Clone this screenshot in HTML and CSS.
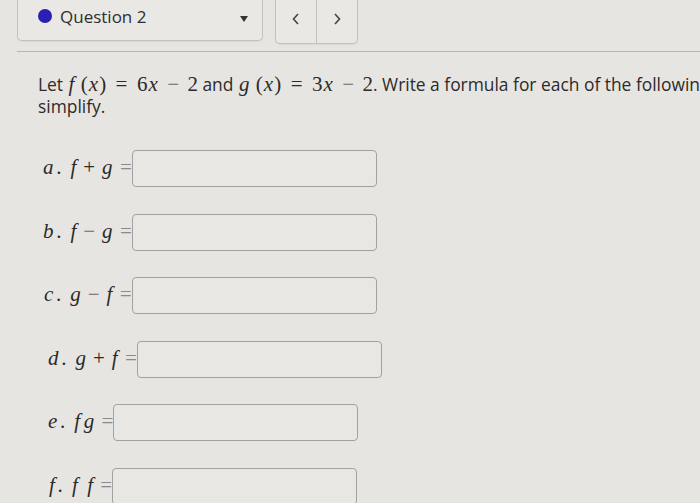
FILE: index.html
```html
<!DOCTYPE html>
<html>
<head>
<meta charset="utf-8">
<link rel="stylesheet" href="styles.css">
</head>
<body>
<header class="top">
  <div class="qbox">
    <span class="dot"></span>
    <span class="qtitle">Question 2</span>
    <svg class="caret" width="10" height="8" viewBox="0 0 10 8"><polygon points="1,1 9,1 5,7" fill="#333"/></svg>
  </div>
  <div class="nav">
    <div class="navbtn"><svg width="10" height="14" viewBox="0 0 10 14"><polyline points="7,2 2.5,7 7,12" fill="none" stroke="#444" stroke-width="1.6"/></svg></div>
    <div class="navbtn"><svg width="10" height="14" viewBox="0 0 10 14"><polyline points="3,2 7.5,7 3,12" fill="none" stroke="#444" stroke-width="1.6"/></svg></div>
  </div>
</header>
<div class="rule"></div>
<main class="content">
  <p class="prompt"><span class="line1">Let <span class="m"><i class="fv">f</i>(<i>x</i>)<span class="rel">=</span>6<i>x</i><span class="bin op">−</span>2</span> and <span class="m"><i class="fv">g</i>(<i>x</i>)<span class="rel">=</span>3<i>x</i><span class="bin op">−</span>2</span>. Write a formula for each of the following</span><br>simplify.</p>
  <div class="items">
    <div class="row r1"><span class="m lbl"><i>a</i><span class="dt">.</span><i>f</i><span class="bin">+</span><i>g</i><span class="eq">=</span></span><span class="box"></span></div>
    <div class="row r2"><span class="m lbl"><i>b</i><span class="dt">.</span><i>f</i><span class="bin op">−</span><i>g</i><span class="eq">=</span></span><span class="box"></span></div>
    <div class="row r3"><span class="m lbl"><i>c</i><span class="dt">.</span><i>g</i><span class="bin op">−</span><i>f</i><span class="eq">=</span></span><span class="box"></span></div>
    <div class="row r4"><span class="m lbl"><i>d</i><span class="dt">.</span><i>g</i><span class="bin">+</span><i>f</i><span class="eq">=</span></span><span class="box"></span></div>
    <div class="row r5"><span class="m lbl"><i>e</i><span class="dt">.</span><i>f</i><i class="pr">g</i><span class="eq">=</span></span><span class="box"></span></div>
    <div class="row r6"><span class="m lbl"><i>f</i><span class="dt">.</span><i>f</i><i class="pr wide">f</i><span class="eq">=</span></span><span class="box"></span></div>
  </div>
</main>
</body>
</html>
```
FILE: styles.css
```css
html, body {
  margin: 0;
  padding: 0;
  background: #e7e5e1;
  width: 700px;
  height: 503px;
  overflow: hidden;
  font-family: "Open Sans", "DejaVu Sans", sans-serif;
  color: #2b2b2b;
}

.top {
  display: flex;
  align-items: flex-start;
  padding-left: 17px;
}

.qbox {
  width: 246px;
  height: 41px;
  border: 1px solid #c4c2be;
  border-top: none;
  border-radius: 0 0 5px 5px;
  background: #eae8e4;
  display: flex;
  align-items: center;
  padding-left: 20px;
  box-sizing: border-box;
  box-shadow: 0 1px 1px rgba(0,0,0,0.06);
}

.dot {
  width: 14px;
  height: 14px;
  border-radius: 50%;
  background: #2a1fb3;
  margin-top: -8px;
}

.qtitle {
  font-size: 17px;
  margin-left: 8px;
  margin-top: -8px;
  color: #2e2e2e;
}

.caret {
  margin-left: auto;
  margin-right: 13px;
  margin-top: -3px;
}

.nav {
  display: flex;
  margin-left: 12px;
  height: 43px;
  border: 1px solid #c4c2be;
  border-top: none;
  border-radius: 0 0 5px 5px;
  background: #eae8e4;
  box-shadow: 0 1px 1px rgba(0,0,0,0.06);
}

.navbtn {
  width: 40px;
  display: flex;
  align-items: center;
  justify-content: center;
  padding-bottom: 6px;
}

.navbtn + .navbtn {
  border-left: 1px solid #c4c2be;
}

.rule {
  margin: 7px 0 0 17px;
  border-top: 1.5px solid #b9b7b3;
}

.content {
  padding-left: 38px;
}

.prompt {
  margin: 21px 0 0 0;
  font-size: 17.4px;
  line-height: 22px;
  white-space: nowrap;
}

.m {
  font-family: "Liberation Serif", "DejaVu Serif", serif;
  font-size: 21px;
  font-variant-ligatures: none;
}

.m i {
  font-style: italic;
  margin: 0 0.05em;
}

.fv {
  margin-right: 0.3em !important;
}

.rel {
  margin: 0 0.45em;
}

.bin {
  margin: 0 0.4em;
}

.lbl .bin {
  margin: 0 0.28em;
}

.dt {
  margin: 0 0.38em 0 0.08em;
}

.pr {
  margin-left: 0.12em !important;
}

.pr.wide {
  margin-left: 0.4em !important;
}

.op {
  color: #6a6a6a;
}

.eq {
  color: #8a8a8a;
  margin-left: 0.3em;
}

.items {
  margin-top: 33px;
  display: flex;
  flex-direction: column;
  gap: 26.5px;
}

.row {
  display: flex;
  align-items: center;
  height: 37px;
}

.r1 { padding-left: 4px; }
.r2 { padding-left: 4px; }
.r3 { padding-left: 5px; }
.r4 { padding-left: 9px; }
.r5 { padding-left: 9px; }
.r6 { padding-left: 10px; }

.lbl {
  white-space: pre;
  margin-top: -2px;
}

.box {
  width: 245px;
  height: 37px;
  box-sizing: border-box;
  border: 1.5px solid #a3a19e;
  border-radius: 4px;
  background: #e9e7e3;
  margin-left: 0;
}
```
